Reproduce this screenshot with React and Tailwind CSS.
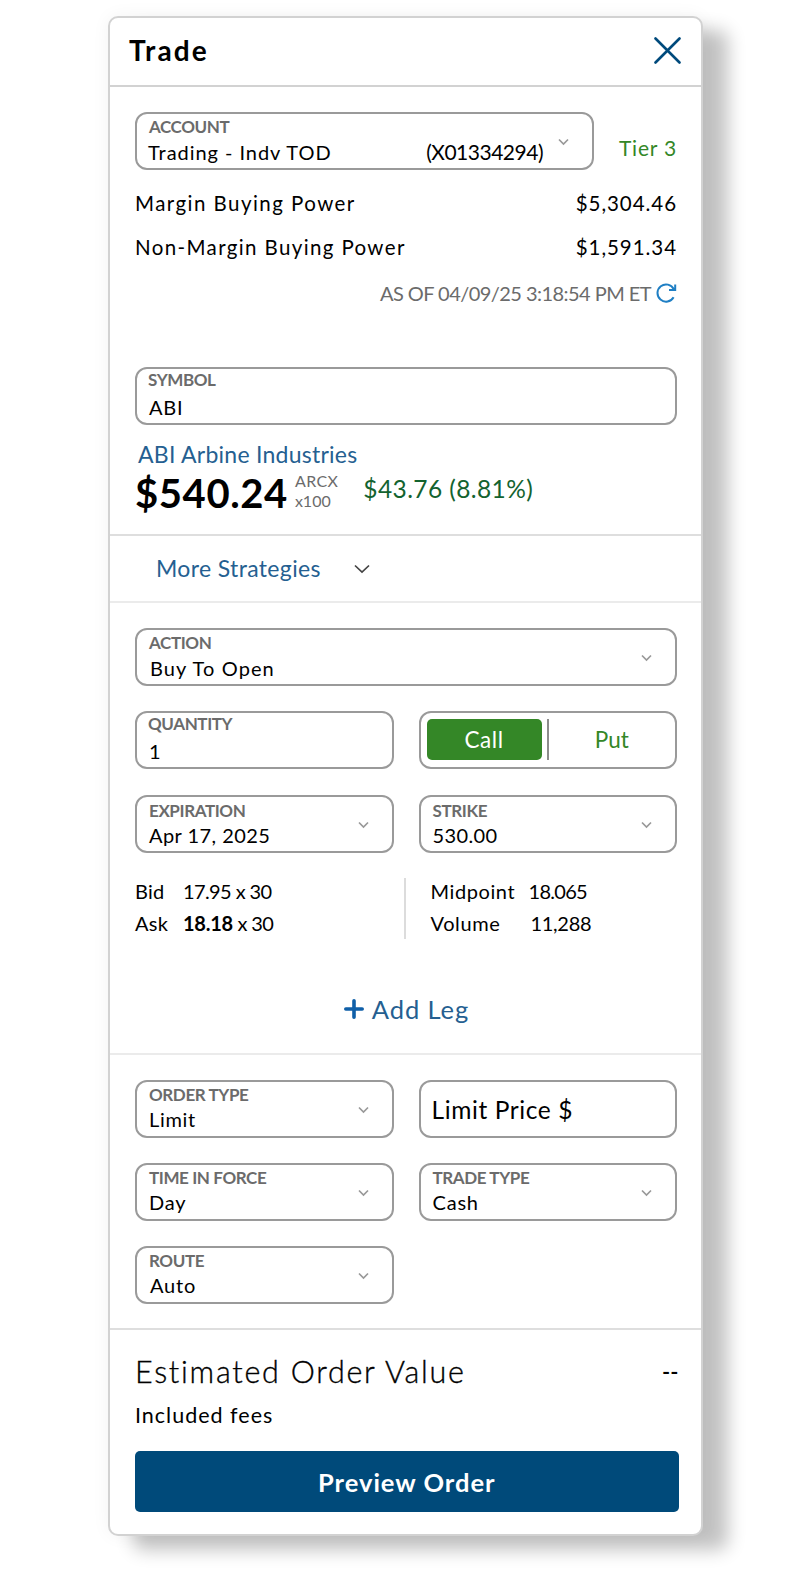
import { useState } from "react";

const Chevron = ({ className = "" }) => (
  <svg width="11" height="8" viewBox="0 0 11 8" fill="none" stroke="#999999" strokeWidth="1.7" className={className}>
    <path d="M1 1.5 5.5 6 10 1.5" />
  </svg>
);

const FieldLabel = ({ children, className = "" }) => (
  <div className={`h-[21.5px] text-[17px] leading-[18px] font-bold tracking-[-0.4px] text-[#6b6b6b] ${className}`}>{children}</div>
);

function SelectField({ label, value, extra, className = "", labelClass = "", valueClass = "tracking-[0.8px]" }) {
  return (
    <button type="button" className={`flex h-[58px] justify-between rounded-xl border-2 border-[#9a9a9a] pt-[3.5px] pr-[23px] pl-3 text-left ${className}`}>
      <div className="grow">
        <FieldLabel className={labelClass}>{label}</FieldLabel>
        <div className="flex justify-between text-[20px] leading-[26px]">
          <span className={valueClass}>{value}</span>
          {extra}
        </div>
      </div>
      <Chevron className="mt-[20.5px] shrink-0" />
    </button>
  );
}

function InputField({ label, value, className = "" }) {
  return (
    <div className={`h-[58px] rounded-xl border-2 border-[#9a9a9a] pt-0.5 pl-3 ${className}`}>
      <FieldLabel className="-ml-px">{label}</FieldLabel>
      <div className="mt-[1.5px] text-[20px] leading-[26px] tracking-[0.8px]">{value}</div>
    </div>
  );
}

export default function App() {
  const [side, setSide] = useState("call");

  const tab = (name) => (side === name ? "bg-[#348727] text-white" : "text-[#348727]");

  return (
    <div className="h-[1577px] w-[811px] overflow-hidden bg-white pt-4 pl-[108px] font-['Lato','Open_Sans',sans-serif] text-black">
      <div className="h-[1520px] w-[595px] rounded-[10px] border-2 border-[#d2d2d2] bg-white shadow-[25px_14px_18px_rgba(0,0,0,0.24),0_0_18px_rgba(0,0,0,0.05)]">
        {/* HEADER */}
        <header className="flex h-[69px] items-start justify-between border-b-2 border-[#d2d2d2] pt-[14px] pr-5 pl-[19px]">
          <h1 className="text-[28px] leading-9 font-bold tracking-[2.1px]">Trade</h1>
          <svg width="27" height="27" viewBox="0 0 27 27" fill="none" stroke="#004a7c" strokeWidth="2.6" strokeLinecap="round" className="mt-[5px]">
            <path d="M1.5 1.5 25.5 25.5M25.5 1.5 1.5 25.5" />
          </svg>
        </header>

        {/* ACCOUNT */}
        <section className="flex h-[449px] flex-col border-b-2 border-[#dedede] pt-[25px] pr-6 pl-[25px]">
          <div className="flex items-center justify-between">
            <SelectField
              label="ACCOUNT"
              value="Trading - Indv TOD"
              className="w-[459px]"
              valueClass="-ml-px tracking-[0.95px]"
              extra={<span className="mr-[15px] text-[21px] tracking-[-0.5px]">(X01334294)</span>}
            />
            <span className="pt-3.5 text-[21px] leading-7 tracking-[0.8px] text-[#348727]">Tier 3</span>
          </div>
          <div className="mt-[19px] flex justify-between text-[20.5px] leading-7">
            <span className="tracking-[1.45px]">Margin Buying Power</span>
            <span className="tracking-[0.95px]">$5,304.46</span>
          </div>
          <div className="mt-4 flex justify-between text-[20.5px] leading-7">
            <span className="tracking-[1.37px]">Non-Margin Buying Power</span>
            <span className="tracking-[0.95px]">$1,591.34</span>
          </div>
          <div className="mt-[18px] flex items-center justify-end gap-[5px] text-[20px] leading-7 tracking-[-0.55px] text-[#6b6b6b]">
            <span>AS OF 04/09/25 3:18:54 PM ET</span>
            <svg width="21" height="21" viewBox="0 0 21 21" fill="none" stroke="#1f7fc4" strokeWidth="2">
              <path d="M17.6 14.2A8.6 8.6 0 1 1 17.8 6.2M19.2 1.6V7H13" />
            </svg>
          </div>

          <InputField label="SYMBOL" value="ABI" className="mt-[60px]" />
          <a className="mt-[15px] pl-[3px] text-[23px] leading-7 tracking-[0.25px] text-[#255f91]">ABI Arbine Industries</a>
          <div className="mt-1 flex h-10">
            <span className="pt-px text-[40px] leading-10 font-bold tracking-[0.6px]">$540.24</span>
            <div className="-mt-px ml-[7px] text-[16px] leading-5 tracking-[0.4px] text-[#6b6b6b]">
              <div>ARCX</div>
              <div className="tracking-normal">x100</div>
            </div>
            <span className="ml-[25px] text-[24.5px] leading-[33px] tracking-[0.4px] text-[#13632f]">$43.76 (8.81%)</span>
          </div>
        </section>

        {/* STRATEGIES */}
        <section className="flex h-[67px] gap-[33px] border-b-2 border-[#ebebeb] pt-[18px] pl-[46px]">
          <span className="text-[23px] leading-7 tracking-[0.35px] text-[#255f91]">More Strategies</span>
          <svg width="16" height="10" viewBox="0 0 16 10" fill="none" stroke="#444444" strokeWidth="1.7" className="mt-2.5">
            <path d="M1 1.5 8 8 15 1.5" />
          </svg>
        </section>

        {/* LEG */}
        <section className="flex h-[452px] flex-col border-b-2 border-[#ebebeb] pt-[25px] pr-6 pl-[25px]">
          <SelectField label="ACTION" value="Buy To Open" valueClass="pl-px tracking-[1.1px]" />
          <div className="mt-[25px] grid grid-cols-2 gap-[25px]">
            <InputField label="QUANTITY" value="1" />
            <div className="flex h-[58px] items-start rounded-xl border-2 border-[#9a9a9a] pt-1.5 pl-1.5 text-[22.5px]">
              <button type="button" onClick={() => setSide("call")} className={`h-[41px] w-[115px] rounded-[5px] pt-px tracking-[0.6px] ${tab("call")}`}>
                Call
              </button>
              <div className="ml-[5px] h-[41px] w-[2px] bg-[#8c8c8c]" />
              <button type="button" onClick={() => setSide("put")} className={`h-[41px] grow rounded-[5px] pt-px ${tab("put")}`}>
                Put
              </button>
            </div>
          </div>
          <div className="mt-[26px] grid grid-cols-2 gap-[25px]">
            <SelectField label="EXPIRATION" value="Apr 17, 2025" labelClass="pt-px" valueClass="tracking-[0.45px]" />
            <SelectField label="STRIKE" value="530.00" labelClass="pt-px" valueClass="tracking-[0.4px]" />
          </div>

          <div className="mt-[22px] flex items-end text-[20px] leading-8">
            <div className="w-12 tracking-[0.3px]">
              <div>Bid</div>
              <div>Ask</div>
            </div>
            <div className="w-[221px] tracking-[-0.6px]">
              <div>17.95 x 30</div>
              <div>
                <b className="tracking-[-0.25px]">18.18</b> x 30
              </div>
            </div>
            <div className="h-[61px] w-[2px] bg-[#dcdcdc]" />
            <div className="ml-[24.5px] w-[98px] tracking-[0.6px]">
              <div>Midpoint</div>
              <div>Volume</div>
            </div>
            <div>
              <div className="tracking-[-0.7px]">18.065</div>
              <div className="pl-0.5 tracking-[-0.3px]">11,288</div>
            </div>
          </div>

          <button type="button" className="mt-[55px] flex items-center justify-center gap-2 pl-px text-[25.5px] leading-[30px] tracking-[0.9px] text-[#255f91]">
            <svg width="20" height="20" viewBox="0 0 20 20" fill="none" stroke="#0f5fa8" strokeWidth="3.6" strokeLinecap="round">
              <path d="M10 1.8V18.2M1.8 10H18.2" />
            </svg>
            Add Leg
          </button>
        </section>

        {/* ORDER OPTIONS */}
        <section className="grid h-[275px] auto-rows-[58px] grid-cols-2 gap-x-[25px] gap-y-[25px] border-b-2 border-[#dedede] pt-[25px] pr-6 pl-[25px]">
          <SelectField label="ORDER TYPE" value="Limit" valueClass="-mt-px tracking-[0.7px]" />
          <div className="flex items-center rounded-xl border-2 border-[#9a9a9a] pt-[3px] pl-[11px] text-[24.5px] tracking-[0.6px]">Limit Price $</div>
          <SelectField label="TIME IN FORCE" value="Day" valueClass="-mt-px tracking-[0.8px]" />
          <SelectField label="TRADE TYPE" value="Cash" valueClass="-mt-px tracking-[0.8px]" />
          <SelectField label="ROUTE" value="Auto" valueClass="-mt-px pl-px tracking-[0.8px]" />
        </section>

        {/* FOOTER */}
        <footer className="flex flex-col pt-[23px] pr-[22.5px] pl-[25px]">
          <div className="flex h-9 justify-between leading-9">
            <span className="text-[30.5px] font-light tracking-[1.75px] [-webkit-text-stroke:0.35px_black]">Estimated Order Value</span>
            <span className="pt-px text-[22px] font-semibold">--</span>
          </div>
          <span className="mt-3 text-[21.5px] leading-7 tracking-[1px]">Included fees</span>
          <button type="button" className="mt-[22px] h-[61px] rounded-[5px] bg-[#004a7a] pt-px text-[25.5px] font-bold tracking-[1px] text-white">
            Preview Order
          </button>
        </footer>
      </div>
    </div>
  );
}
